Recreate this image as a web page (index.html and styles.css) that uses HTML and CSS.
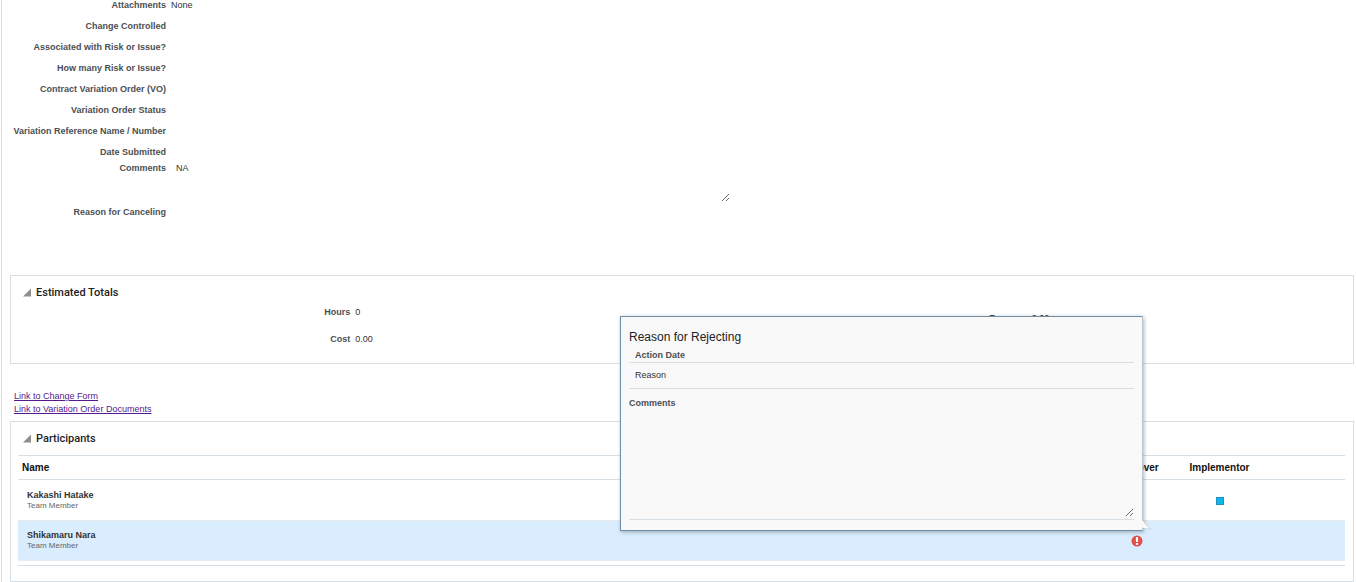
FILE: index.html
```html
<!DOCTYPE html>
<html lang="en">
<head>
    <meta charset="UTF-8">
    <meta name="viewport" content="width=device-width, initial-scale=1.0">
    <title>Change Request</title>
    <link rel="stylesheet" href="styles.css">
</head>
<body>
    <main class="page">
        <div class="fields">
            <div class="field"><span class="label">Attachments</span><span>None</span></div>
            <div class="field"><span class="label">Change Controlled</span></div>
            <div class="field"><span class="label">Associated with Risk or Issue?</span></div>
            <div class="field"><span class="label">How many Risk or Issue?</span></div>
            <div class="field"><span class="label">Contract Variation Order (VO)</span></div>
            <div class="field"><span class="label">Variation Order Status</span></div>
            <div class="field"><span class="label">Variation Reference Name / Number</span></div>
            <div class="field"><span class="label">Date Submitted</span></div>
            <div class="field field-area">
                <label class="label" for="comments">Comments</label>
                <textarea id="comments" readonly>NA</textarea>
            </div>
            <div class="field"><span class="label">Reason for Canceling</span></div>
        </div>

        <section class="panel totals">
            <h2><span class="arrow"></span>Estimated Totals</h2>
            <div class="totals-grid">
                <span class="label">Hours</span><span>0</span>
                <span class="label lower">Revenue</span><span class="lower">0.00</span>
                <span class="label">Cost</span><span>0.00</span>
            </div>
        </section>

        <nav class="links">
            <a href="#change-form">Link to Change Form</a>
            <a href="#variation-documents">Link to Variation Order Documents</a>
        </nav>

        <section class="panel participants">
            <h2><span class="arrow"></span>Participants</h2>
            <div class="table-wrap">
                <table>
                    <thead>
                        <tr>
                            <th class="name">Name</th>
                            <th class="role">Approver</th>
                            <th class="role">Implementor</th>
                            <th class="role spare"></th>
                        </tr>
                    </thead>
                    <tbody>
                        <tr>
                            <td class="name"><strong>Kakashi Hatake</strong><small>Team Member</small></td>
                            <td></td>
                            <td><span class="square"></span></td>
                            <td></td>
                        </tr>
                        <tr class="selected">
                            <td class="name"><strong>Shikamaru Nara</strong><small>Team Member</small></td>
                            <td>
                                <svg class="alert" viewBox="0 0 12 12" role="img" aria-label="Rejected">
                                    <circle cx="6" cy="6" r="5.5" fill="#e2504c"/>
                                    <path d="M4.9 2h2.2v5H4.9zM4.9 8h2.2v2H4.9z" fill="#fff"/>
                                </svg>
                            </td>
                            <td></td>
                            <td></td>
                        </tr>
                    </tbody>
                </table>
            </div>
        </section>
    </main>

    <div class="popup" role="dialog" aria-labelledby="popup-title">
        <h3 id="popup-title">Reason for Rejecting</h3>
        <div class="popup-row date">Action Date</div>
        <div class="popup-row reason">Reason</div>
        <label class="label" for="reject-comments">Comments</label>
        <div class="reject-area">
            <textarea id="reject-comments" readonly></textarea>
        </div>
        <svg class="tail" viewBox="0 0 10 12" aria-hidden="true">
            <path d="M0 1l9 9.5L0 8z" fill="#f9f9f9"/>
            <path d="M0 1l9 9.5L0 8" fill="none" stroke="#c9d3da"/>
            <path d="M0 2v6.5l6 1z" fill="#f9f9f9"/>
        </svg>
    </div>
</body>
</html>
```
FILE: styles.css
```css
* {
    box-sizing: border-box;
}
body {
    margin: 0;
    font-family: "Liberation Sans", Arial, sans-serif;
    font-size: 9px;
    line-height: 12px;
    color: #333;
    background-color: #fff;
    overflow: hidden;
}
.page {
    margin-left: 1px;
    padding: 0 2px 0 8px;
    border-left: 1px solid #d6dfe6;
}
.label {
    font-weight: bold;
    color: #4b4f54;
}

/* request fields */
.fields {
    margin-top: -5px;
    padding-bottom: 52px;
}
.field {
    display: grid;
    grid-template-columns: 156px 1fr;
    column-gap: 5px;
    line-height: 21px;
}
.field .label {
    text-align: right;
}
.field-area {
    line-height: 12px;
    margin-top: -1px;
}
textarea {
    display: block;
    font: inherit;
    color: inherit;
    border: none;
    background: transparent;
    outline: none;
    resize: both;
}
#comments {
    width: 559px;
    height: 40px;
    padding: 0 5px;
}

/* panels */
.panel {
    border: 1px solid #d6dfe6;
}
h2 {
    display: flex;
    align-items: center;
    gap: 5px;
    margin: 0;
    padding: 8px 12px;
    font-family: Roboto, sans-serif;
    font-size: 11px;
    font-weight: 500;
    line-height: 17px;
    color: #222;
}
.arrow {
    width: 8px;
    height: 8px;
    background-color: #8b8f93;
    clip-path: polygon(100% 0, 100% 100%, 0 100%);
}
.totals {
    padding-bottom: 18px;
}
.totals-grid {
    display: grid;
    grid-template-columns: repeat(3, 25%) 1fr;
    gap: 15px 5px;
    padding: 0 3px 0 6px;
    margin-top: -3px;
}
.totals-grid .label {
    text-align: right;
}
.lower {
    padding-top: 6px;
    margin-bottom: -6px;
}
.links {
    display: flex;
    flex-direction: column;
    align-items: flex-start;
    padding: 26px 4px 5px;
    line-height: 13px;
}
.links a {
    color: #551a8b;
}

/* participants */
.table-wrap {
    margin: 0 8px 15px 7px;
    padding-bottom: 4px;
    border-top: 1px solid #d6dfe6;
    border-bottom: 1px solid #d6dfe6;
}
table {
    width: 100%;
    table-layout: fixed;
    border-collapse: separate;
    border-spacing: 0;
}
th {
    height: 24px;
    padding: 0;
    font-size: 10px;
    color: #111;
    border-bottom: 1px solid #d6dfe6;
}
th.name {
    padding-left: 4px;
    text-align: left;
}
.role {
    width: 83px;
}
.role.spare {
    width: 84px;
}
td {
    height: 41px;
    padding: 0;
    text-align: center;
    border-bottom: 1px solid #e8ecef;
}
.selected td {
    height: 40px;
}
td.name {
    padding-left: 9px;
    text-align: left;
}
td strong,
td small {
    display: block;
    line-height: 11px;
}
td small {
    font-size: 8px;
    line-height: 10px;
    color: #666;
}
.selected {
    background-color: #d9edff;
}
.square {
    display: inline-block;
    width: 8px;
    height: 8px;
    vertical-align: middle;
    background-color: #0cb5ee;
    border: 1px solid #1d94bb;
}
.alert {
    width: 12px;
    height: 12px;
    vertical-align: middle;
}

/* popup over the page */
.popup {
    position: absolute;
    top: 316px;
    right: 213px;
    width: 523px;
    padding: 12px 8px 10px;
    background-color: #f9f9f9;
    border: 1px solid #6f8ea8;
    border-right-color: #b9c8d3;
    box-shadow: 1px 1px 4px rgba(0, 0, 0, 0.3);
}
.popup h3 {
    margin: 0;
    font-size: 12px;
    font-weight: normal;
    line-height: 16px;
    color: #222;
}
.popup-row {
    padding: 0 6px;
    border-bottom: 1px solid #d6dfe6;
}
.date {
    padding-top: 4px;
    padding-bottom: 1px;
    font-weight: bold;
    color: #4b4f54;
}
.reason {
    line-height: 25px;
    margin-bottom: 8px;
}
.popup .label {
    display: block;
}
.reject-area {
    padding-bottom: 2px;
    border-bottom: 1px solid #d6dfe6;
}
#reject-comments {
    width: 100%;
    height: 108px;
}
.tail {
    position: absolute;
    right: -10px;
    bottom: -1px;
    width: 10px;
    height: 12px;
}
```
